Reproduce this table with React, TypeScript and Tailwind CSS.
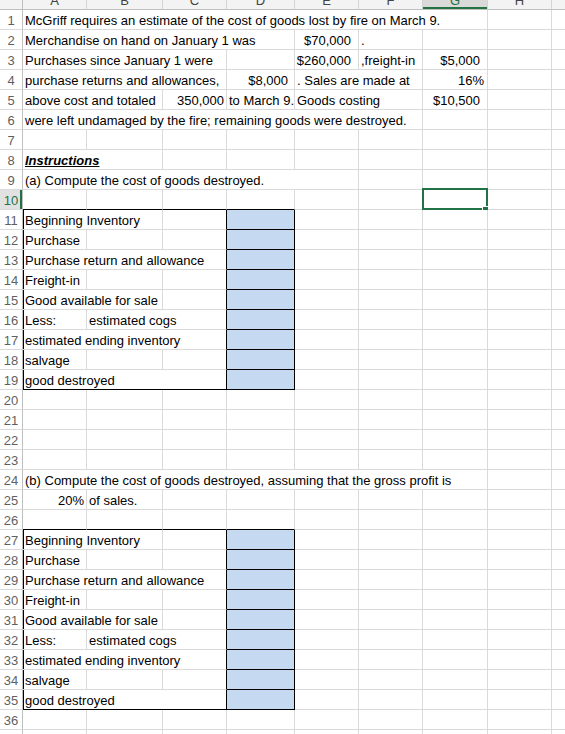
import React from 'react';

type Cell = { c: number; s?: number; t: React.ReactNode; r?: string };

const COLS = 'grid grid-cols-[23px_64px_76px_64px_68px_64px_64px_65px_64px_64px]';
const SPAN = ['', '', 'col-span-2', 'col-span-3', 'col-span-4', 'col-span-5', 'col-span-6', 'col-span-7'];
const LETTERS = ['A', 'B', 'C', 'D', 'E', 'F', 'G', 'H', 'I'];

const tableRows = (start: number): Record<number, Cell[]> => ({
  [start]: [{ c: 1, s: 2, t: 'Beginning Inventory' }],
  [start + 1]: [{ c: 1, t: 'Purchase' }],
  [start + 2]: [{ c: 1, s: 3, t: 'Purchase return and allowance' }],
  [start + 3]: [{ c: 1, t: 'Freight-in' }],
  [start + 4]: [{ c: 1, s: 2, t: 'Good available for sale' }],
  [start + 5]: [{ c: 1, t: 'Less:' }, { c: 2, s: 2, t: 'estimated cogs' }],
  [start + 6]: [{ c: 1, s: 3, t: 'estimated ending inventory' }],
  [start + 7]: [{ c: 1, t: 'salvage' }],
  [start + 8]: [{ c: 1, s: 3, t: 'good destroyed' }],
});

const rows: Record<number, Cell[]> = {
  1: [{ c: 1, s: 7, t: 'McGriff requires an estimate of the cost of goods lost by fire on March 9.' }],
  2: [
    { c: 1, s: 4, t: 'Merchandise on hand on January 1 was' },
    { c: 5, t: '$70,000', r: 'pr-[7px]' },
    { c: 6, t: '.' },
  ],
  3: [
    { c: 1, s: 3, t: 'Purchases since January 1 were' },
    { c: 5, t: '$260,000', r: 'pr-[7px]' },
    { c: 6, t: ',freight-in' },
    { c: 7, t: '$5,000', r: 'pr-[7px]' },
  ],
  4: [
    { c: 1, s: 3, t: 'purchase returns and allowances,' },
    { c: 4, t: '$8,000', r: 'pr-[6px]' },
    { c: 5, s: 2, t: '. Sales are made at' },
    { c: 7, t: '16%', r: 'pr-[3px]' },
  ],
  5: [
    { c: 1, s: 2, t: 'above cost and totaled' },
    { c: 3, t: '350,000', r: 'pr-[2px]' },
    { c: 4, t: 'to March 9.' },
    { c: 5, s: 2, t: 'Goods costing' },
    { c: 7, t: '$10,500', r: 'pr-[7px]' },
  ],
  6: [{ c: 1, s: 6, t: 'were left undamaged by the fire; remaining goods were destroyed.' }],
  8: [{ c: 1, s: 2, t: <span className="font-bold italic underline">Instructions</span> }],
  9: [{ c: 1, s: 5, t: '(a) Compute the cost of goods destroyed.' }],
  ...tableRows(11),
  24: [{ c: 1, s: 7, t: '(b) Compute the cost of goods destroyed, assuming that the gross profit is' }],
  25: [
    { c: 1, t: '20%', r: 'pr-[2px]' },
    { c: 2, t: 'of sales.' },
  ],
  ...tableRows(27),
};

const inTable = (r: number) => (r >= 11 && r <= 19) || (r >= 27 && r <= 35);
const isLast = (r: number) => r === 19 || r === 35;
const isAbove = (r: number) => r === 10 || r === 26;

function cellClass(r: number, s: number, e: number) {
  const tbl = inTable(r) && s <= 4;
  const rightBlack = tbl && e >= 3;
  const bottomBlack = (tbl && (s === 4 || isLast(r))) || (isAbove(r) && s <= 4);
  return [
    'relative flex h-5 items-end overflow-visible whitespace-nowrap border-r border-b pb-[1px] pl-[2px]',
    rightBlack ? 'border-r-black' : 'border-r-[#dadada]',
    bottomBlack ? 'border-b-black' : 'border-b-[#dadada]',
    tbl && s === 4 ? 'bg-[#c5d9f1]' : 'bg-white',
    tbl && s === 1 ? 'shadow-[inset_1px_0_0_#000]' : '',
  ].join(' ');
}

function Row({ r }: { r: number }) {
  const data = rows[r] ?? [];
  const out: React.ReactNode[] = [];
  const sel = r === 10;
  out.push(
    <div
      key="h"
      className={`flex h-5 items-end justify-center border-r border-b border-r-[#bfbfbf] border-b-[#dadada] pb-[1px] ${
        sel ? 'bg-[#e1e1e1] text-[#217346] shadow-[inset_-2px_0_0_#217346]' : 'bg-white text-[#5f5f5f]'
      }`}
    >
      {r}
    </div>
  );
  let col = 1;
  while (col <= 9) {
    const cell = data.find((d) => d.c === col);
    const span = cell?.s ?? 1;
    const end = col + span - 1;
    out.push(
      <div key={col} className={`${SPAN[span]} ${cellClass(r, col, end)} ${cell?.r ? `justify-end ${cell.r}` : ''}`}>
        {cell?.t}
        {sel && col === 7 && (
          <>
            <div className="absolute -left-[1px] -top-[2px] h-[22px] w-[66px] border-2 border-[#217346]" />
            <div className="absolute left-[59px] top-[16px] h-[7px] w-[7px] border border-white bg-[#217346]" />
          </>
        )}
      </div>
    );
    col = end + 1;
  }
  return <div className={`${COLS} leading-[14px]`}>{out}</div>;
}

export default function App() {
  return (
    <div className="h-[734px] w-[565px] overflow-hidden bg-white font-['Liberation_Sans',Arial,sans-serif] text-[13px] text-black">
      <div className="h-[10px] overflow-hidden">
        <div className={`${COLS} -mt-[10px] leading-[14px]`}>
          <div className="h-5 border-r border-b border-r-[#bfbfbf] border-b-[#bfbfbf] bg-[#f3f3f3]" />
          {LETTERS.map((l) => (
            <div
              key={l}
              className={`flex h-5 items-end justify-center border-r border-b border-r-[#d4d4d4] border-b-[#bfbfbf] pb-[1px] ${
                l === 'G' ? 'bg-[#d9d9d9] text-[#217346] shadow-[inset_0_-2px_0_#217346]' : 'bg-[#f3f3f3] text-[#444]'
              }`}
            >
              {l}
            </div>
          ))}
        </div>
      </div>
      {Array.from({ length: 37 }, (_, i) => (
        <Row key={i + 1} r={i + 1} />
      ))}
    </div>
  );
}
